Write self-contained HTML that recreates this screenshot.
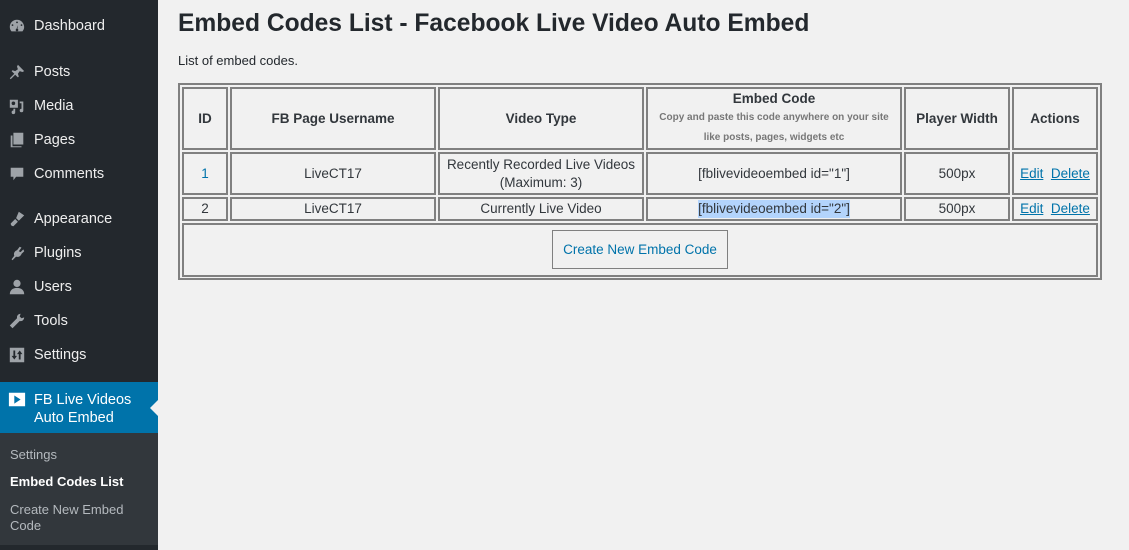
<!DOCTYPE html>
<html><head><meta charset="utf-8"><style>
*{margin:0;padding:0;box-sizing:border-box}
body{width:1129px;height:550px;background:#f1f1f1;font-family:"Liberation Sans",sans-serif;color:#23282d;position:relative;overflow:hidden}
#sb{position:absolute;left:0;top:0;width:158px;height:550px;background:#23282d}
.mi{position:absolute;left:34px;color:#eee;font-size:14.5px;line-height:18px}
.ic{position:absolute;left:8px;width:18px;height:18px}
.ic svg{width:18px;height:18px;fill:#9ea3a8}
#act{position:absolute;left:0;top:382px;width:158px;height:51px;background:#0073aa}
#sub{position:absolute;left:0;top:433px;width:158px;height:112px;background:#32373c}
.si{position:absolute;left:10px;font-size:13px;line-height:16px;color:#b4b9be}
h1{position:absolute;left:178px;top:10px;font-size:24.6px;font-weight:bold;white-space:nowrap}
.p{position:absolute;left:178px;top:53px;font-size:13px}
.c{position:absolute;border:2px solid #808080;display:flex;align-items:center;justify-content:center;text-align:center;font-size:13.5px;color:#32373c;line-height:18px}
.h{font-weight:bold}
a{color:#0073aa;text-decoration:underline}
</style></head><body>
<div id="sb">
<div class="ic" style="top:17px"><svg viewBox="0 0 20 20"><path d="M10 3a8 8 0 0 0-8 8c0 2 .7 3.7 1.9 5h12.2A8 8 0 0 0 10 3zm0 2a1 1 0 1 1 0 2 1 1 0 0 1 0-2zM5 8a1 1 0 1 1 0 2 1 1 0 0 1 0-2zm10 0a1 1 0 1 1 0 2 1 1 0 0 1 0-2zm-4 1l-.5 4a1.5 1.5 0 1 1-1 0z"/></svg></div>
<div class="mi" style="top:17px">Dashboard</div>
<div class="ic" style="top:63px"><svg viewBox="0 0 20 20"><path d="M11 2l7 7-2 1-3-1-2 3 1 3-1 1-3-3-5 5-1-1 5-5-3-3 1-1 3 1 3-2-1-3z"/></svg></div>
<div class="mi" style="top:63px">Posts</div>
<div class="ic" style="top:97px"><svg viewBox="0 0 20 20"><path d="M2 3h9v9H2zM6 5a2 2 0 1 0 0 4 2 2 0 0 0 0-4zM13 5h4v10a2 2 0 1 1-2-2V7h-2zM6 13h2v4a2 2 0 1 1-2-2z"/></svg></div>
<div class="mi" style="top:97px">Media</div>
<div class="ic" style="top:131px"><svg viewBox="0 0 20 20"><path d="M6 2h11v13H6zM3 5h2v12h10v1H3z"/></svg></div>
<div class="mi" style="top:131px">Pages</div>
<div class="ic" style="top:165px"><svg viewBox="0 0 20 20"><path d="M3 3h14v10h-8l-3 4v-4H3z"/></svg></div>
<div class="mi" style="top:165px">Comments</div>
<div class="ic" style="top:210px"><svg viewBox="0 0 20 20"><path d="M12 2l6 4-6 6-3-3zM8 10l3 3-5 5c-2 0-3-1-3-3z"/></svg></div>
<div class="mi" style="top:210px">Appearance</div>
<div class="ic" style="top:244px"><svg viewBox="0 0 20 20"><path d="M13 3l2 1-3 4 2 1 3-3 1 2-3 3c-1 3-4 4-6 3l-4 4-1-1 3-4c-1-2 0-5 3-6z"/></svg></div>
<div class="mi" style="top:244px">Plugins</div>
<div class="ic" style="top:278px"><svg viewBox="0 0 20 20"><circle cx="10" cy="6" r="4"/><path d="M2 18c0-4 3-7 8-7s8 3 8 7z"/></svg></div>
<div class="mi" style="top:278px">Users</div>
<div class="ic" style="top:312px"><svg viewBox="0 0 20 20"><path d="M14 2a4 4 0 0 0-4 5L2 15l3 3 8-8a4 4 0 0 0 5-4l-3 1-2-2z"/></svg></div>
<div class="mi" style="top:312px">Tools</div>
<div class="ic" style="top:346px"><svg viewBox="0 0 20 20"><path d="M2 2h16v16H2zM6 5v6H4l3 4 3-4H8V5zm7 0l-3 4h2v6h2V9h2z"/></svg></div>
<div class="mi" style="top:346px">Settings</div>
<div id="act"></div>
<div style="position:absolute;left:150px;top:400px;width:0;height:0;border-top:8px solid transparent;border-bottom:8px solid transparent;border-right:8px solid #f1f1f1"></div>
<div class="ic" style="top:391px"><svg viewBox="0 0 20 20" style="fill:#fff"><path d="M1 2h18v15H1z"/><path d="M7 5v9l7-4.5z" fill="#0073aa"/></svg></div>
<div class="mi" style="top:391px;color:#fff">FB Live Videos<br>Auto Embed</div>
<div id="sub"></div>
<div class="si" style="top:447px">Settings</div>
<div class="si" style="top:474px;color:#fff;font-weight:bold">Embed Codes List</div>
<div class="si" style="top:502px">Create New Embed<br>Code</div>
</div>
<h1>Embed Codes List - Facebook Live Video Auto Embed</h1>
<div class="p">List of embed codes.</div>
<div style="position:absolute;left:178px;top:83px;width:924px;height:197px;border:2px solid #808080"></div>
<div class="c h" style="left:182px;top:87px;width:46px;height:63px">ID</div>
<div class="c h" style="left:230px;top:87px;width:206px;height:63px">FB Page Username</div>
<div class="c h" style="left:438px;top:87px;width:206px;height:63px">Video Type</div>
<div class="c h" style="left:646px;top:87px;width:256px;height:63px;flex-direction:column">Embed Code<span style="font-size:10px;color:#777;line-height:20px">Copy and paste this code anywhere on your site<br>like posts, pages, widgets etc</span></div>
<div class="c h" style="left:904px;top:87px;width:106px;height:63px">Player Width</div>
<div class="c h" style="left:1012px;top:87px;width:86px;height:63px">Actions</div>

<div class="c" style="left:182px;top:152px;width:46px;height:43px;color:#0073aa">1</div>
<div class="c" style="left:230px;top:152px;width:206px;height:43px">LiveCT17</div>
<div class="c" style="left:438px;top:152px;width:206px;height:43px">Recently Recorded Live Videos<br>(Maximum: 3)</div>
<div class="c" style="left:646px;top:152px;width:256px;height:43px">[fblivevideoembed id="1"]</div>
<div class="c" style="left:904px;top:152px;width:106px;height:43px">500px</div>
<div class="c" style="left:1012px;top:152px;width:86px;height:43px"><a>Edit</a>&nbsp;&nbsp;<a>Delete</a></div>

<div class="c" style="left:182px;top:197px;width:46px;height:24px">2</div>
<div class="c" style="left:230px;top:197px;width:206px;height:24px">LiveCT17</div>
<div class="c" style="left:438px;top:197px;width:206px;height:24px">Currently Live Video</div>
<div class="c" style="left:646px;top:197px;width:256px;height:24px"><span style="background:#b3d4fc">[fblivevideoembed id="2"]</span></div>
<div class="c" style="left:904px;top:197px;width:106px;height:24px">500px</div>
<div class="c" style="left:1012px;top:197px;width:86px;height:24px"><a>Edit</a>&nbsp;&nbsp;<a>Delete</a></div>

<div class="c" style="left:182px;top:223px;width:916px;height:54px"></div>
<div style="position:absolute;left:552px;top:230px;width:176px;height:39px;border:1px solid #808080;color:#0073aa;font-size:13.5px;display:flex;align-items:center;justify-content:center">Create New Embed Code</div>
</body></html>
